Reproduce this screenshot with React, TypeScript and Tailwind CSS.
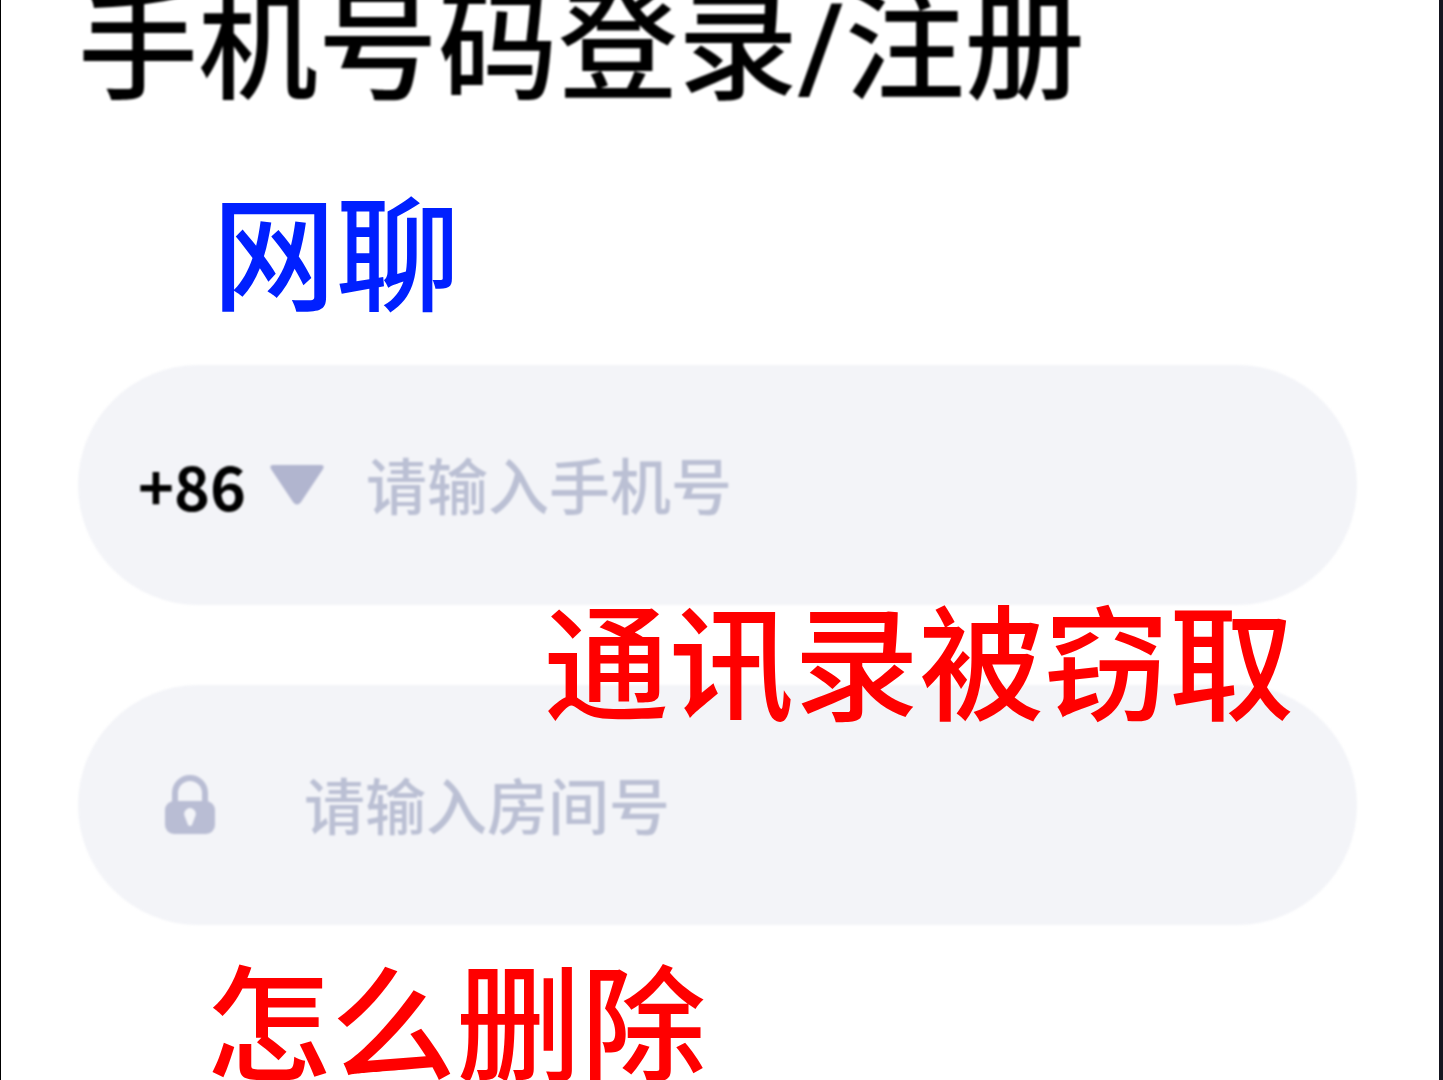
import { useState } from "react";

export default function App() {
  const [prefix, setPrefix] = useState("+86");
  const [phone, setPhone] = useState("");
  const [room, setRoom] = useState("");

  return (
    <main className="min-h-screen overflow-hidden bg-white border-l border-r-4 border-l-black border-r-[#15151f] pl-[77px] pr-[82px] font-['Roboto','Noto_Sans_CJK_SC',sans-serif]">
      <h1 className="-mt-7 h-[154px] text-[120px] leading-[154px] font-medium text-black whitespace-nowrap blur-[1px]">手机号码登录/注册</h1>

      <p className="mt-[53px] h-[160px] pl-[134px] text-[124px] leading-[160px] font-medium text-[#0020ff] whitespace-nowrap">网聊</p>

      <form className="mt-[26px]">
        <div className="flex h-[240px] items-center rounded-full bg-[#f3f4f8] pl-[60px] pr-16 blur-[1px]">
          <div className="relative flex w-[186px] shrink-0 items-center">
            <select
              aria-label="国家区号"
              value={prefix}
              onChange={(e) => setPrefix(e.target.value)}
              className="w-full appearance-none bg-transparent font-['Noto_Sans_CJK_SC',sans-serif] text-[61px] leading-[80px] font-bold text-black outline-none"
            >
              <option>+86</option>
            </select>
            <svg viewBox="0 0 54 40" className="pointer-events-none absolute right-0 h-10 w-[54px]" fill="#b1b5cf">
              <path d="M3 0h48q4 0 2 4L31 37q-4 5-8 0L1 4Q-1 0 3 0Z" />
            </svg>
          </div>
          <input
            aria-label="手机号"
            type="tel"
            value={phone}
            onChange={(e) => setPhone(e.target.value)}
            placeholder="请输入手机号"
            className="ml-[42px] mt-2 min-w-0 flex-1 bg-transparent text-[61px] leading-[80px] font-medium outline-none placeholder:text-[#bbc0d4]"
          />
        </div>

        <p className="relative z-10 h-[80px] pl-[466px] text-[125px] leading-[128px] font-medium text-[#ff0000] whitespace-nowrap">通讯录被窃取</p>

        <div className="flex h-[240px] items-center rounded-full bg-[#f3f4f8] pl-[86px] pr-16 blur-[1px]">
          <svg viewBox="0 0 52 60" className="h-[60px] w-[52px] shrink-0" fill="none">
            <path d="M11 30V18a15 15 0 0 1 30 0v12" stroke="#b9bdd4" strokeWidth="6" />
            <rect x="1" y="26" width="50" height="33" rx="9" fill="#b9bdd4" />
            <path d="M26 33a6 6 0 0 1 5 9l-3 8q-2 2-4 0l-3-8a6 6 0 0 1 5-9Z" fill="#f3f4f8" />
          </svg>
          <input
            aria-label="房间号"
            value={room}
            onChange={(e) => setRoom(e.target.value)}
            placeholder="请输入房间号"
            className="ml-[88px] mt-2 min-w-0 flex-1 bg-transparent text-[61px] leading-[80px] font-medium outline-none placeholder:text-[#bbc0d4]"
          />
        </div>
      </form>

      <p className="mt-6 h-[130px] pl-[128px] text-[125px] leading-[160px] font-medium text-[#ff0000] whitespace-nowrap">怎么删除</p>
    </main>
  );
}
